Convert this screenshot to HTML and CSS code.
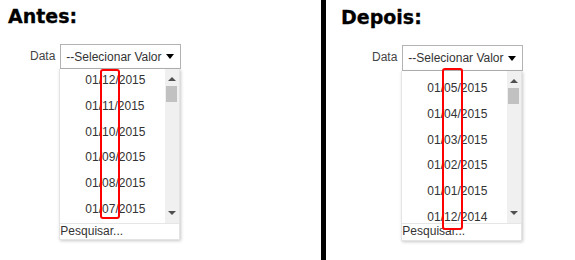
FILE: index.html
```html
<!DOCTYPE html>
<html lang="pt">
<head>
  <meta charset="UTF-8">
  <title>Antes e Depois</title>
  <link rel="stylesheet" href="styles.css">
</head>
<body>

<div class="page">
  <section class="panel before">
    <h2 class="title">Antes:</h2>
    <div class="field">
      <label class="field-label">Data</label>
      <div class="combo">
        <div class="combo-box"><span class="combo-value">--Selecionar Valor</span><i class="caret"></i></div>
        <div class="combo-menu">
          <div class="combo-list">
            <ul class="options">
              <li>01/12/2015</li>
              <li>01/11/2015</li>
              <li>01/10/2015</li>
              <li>01/09/2015</li>
              <li>01/08/2015</li>
              <li>01/07/2015</li>
            </ul>
            <div class="scrollbar">
              <span class="sb-up"></span>
              <span class="sb-thumb"></span>
              <span class="sb-down"></span>
            </div>
          </div>
          <div class="combo-search">Pesquisar...</div>
          <span class="mark"></span>
        </div>
      </div>
    </div>
  </section>

  <div class="divider"></div>

  <section class="panel after">
    <h2 class="title">Depois:</h2>
    <div class="field">
      <label class="field-label">Data</label>
      <div class="combo">
        <div class="combo-box"><span class="combo-value">--Selecionar Valor</span><i class="caret"></i></div>
        <div class="combo-menu">
          <div class="combo-list">
            <ul class="options">
              <li>01/05/2015</li>
              <li>01/04/2015</li>
              <li>01/03/2015</li>
              <li>01/02/2015</li>
              <li>01/01/2015</li>
              <li>01/12/2014</li>
            </ul>
            <div class="scrollbar">
              <span class="sb-up"></span>
              <span class="sb-thumb"></span>
              <span class="sb-down"></span>
            </div>
          </div>
          <div class="combo-search">Pesquisar...</div>
          <span class="mark"></span>
        </div>
      </div>
    </div>
  </section>
</div>

</body>
</html>
```

FILE: styles.css
```css
body {
  margin: 0;
  background-color: #fff;
  font-family: 'Liberation Sans', Arial, sans-serif;
  color: #333;
}
.page {
  display: flex;
  height: 260px;
  overflow: hidden;
}
.panel {
  box-sizing: border-box;
}
.panel.before {
  width: 321px;
  padding: 5px 0 0 8px;
}
.panel.after {
  flex: 1;
  padding: 6px 0 0 15px;
}
.divider {
  width: 5px;
  background-color: #000;
}
.title {
  margin: 0;
  font-family: 'DejaVu Sans', Verdana, sans-serif;
  font-size: 19px;
  line-height: 22px;
  font-weight: bold;
  color: #000;
  -webkit-text-stroke: 0.3px #000;
}
.field {
  display: flex;
  align-items: flex-start;
  gap: 5px;
  margin-top: 17px;
  padding-left: 22px;
}
.after .field {
  padding-left: 31px;
}
.field-label {
  font-size: 12px;
  line-height: 25px;
  color: #444;
}
.combo {
  width: 121px;
}
.combo-box {
  box-sizing: border-box;
  height: 25px;
  display: flex;
  align-items: center;
  justify-content: space-between;
  padding: 0 6px 0 5px;
  border: 1px solid #b3b3b3;
  background-color: #fff;
  font-size: 12px;
  color: #333;
  white-space: nowrap;
  overflow: hidden;
}
.after .combo-box {
  height: 26px;
}
.caret {
  flex: none;
  width: 0;
  height: 0;
  border-left: 4px solid transparent;
  border-right: 4px solid transparent;
  border-top: 5px solid #000;
}
.combo-menu {
  position: relative;
  box-sizing: border-box;
  width: 121px;
  margin-left: -1px;
  border: 1px solid #e4e4e4;
  border-top: none;
  background-color: #fff;
  box-shadow: 1px 1px 3px rgba(0, 0, 0, 0.22);
}
.combo-list {
  display: flex;
  height: 154px;
  border-bottom: 1px solid #e6e6e6;
}
.after .combo-list {
  height: 152px;
}
.options {
  flex: 1;
  margin: 0;
  padding: 0 0 0 25px;
  list-style: none;
  overflow: hidden;
  font-size: 12px;
}
.options li {
  height: 25.8px;
  line-height: 25.8px;
  white-space: nowrap;
}
.before .options li:first-child {
  margin-top: -1px;
}
.after .options li:first-child {
  margin-top: 5px;
}
.scrollbar {
  position: relative;
  width: 14px;
  background-color: #f0f0f0;
}
.sb-up,
.sb-down {
  position: absolute;
  left: 3px;
  width: 0;
  height: 0;
  border-left: 4px solid transparent;
  border-right: 4px solid transparent;
}
.sb-up {
  top: 8px;
  border-bottom: 4px solid #505050;
}
.sb-down {
  bottom: 8px;
  border-top: 4px solid #505050;
}
.sb-thumb {
  position: absolute;
  top: 17px;
  left: 1px;
  width: 11px;
  height: 16px;
  background-color: #c1c1c1;
}
.combo-search {
  height: 15px;
  line-height: 15px;
  font-size: 12px;
  color: #333;
}
.after .combo-search {
  height: 16px;
}
.mark {
  position: absolute;
  top: 0;
  left: 40px;
  width: 20px;
  height: 150px;
  box-sizing: border-box;
  border: 2px solid #f00;
  border-radius: 3px;
}
.after .mark {
  top: -3px;
  width: 21px;
  height: 162px;
}
```
